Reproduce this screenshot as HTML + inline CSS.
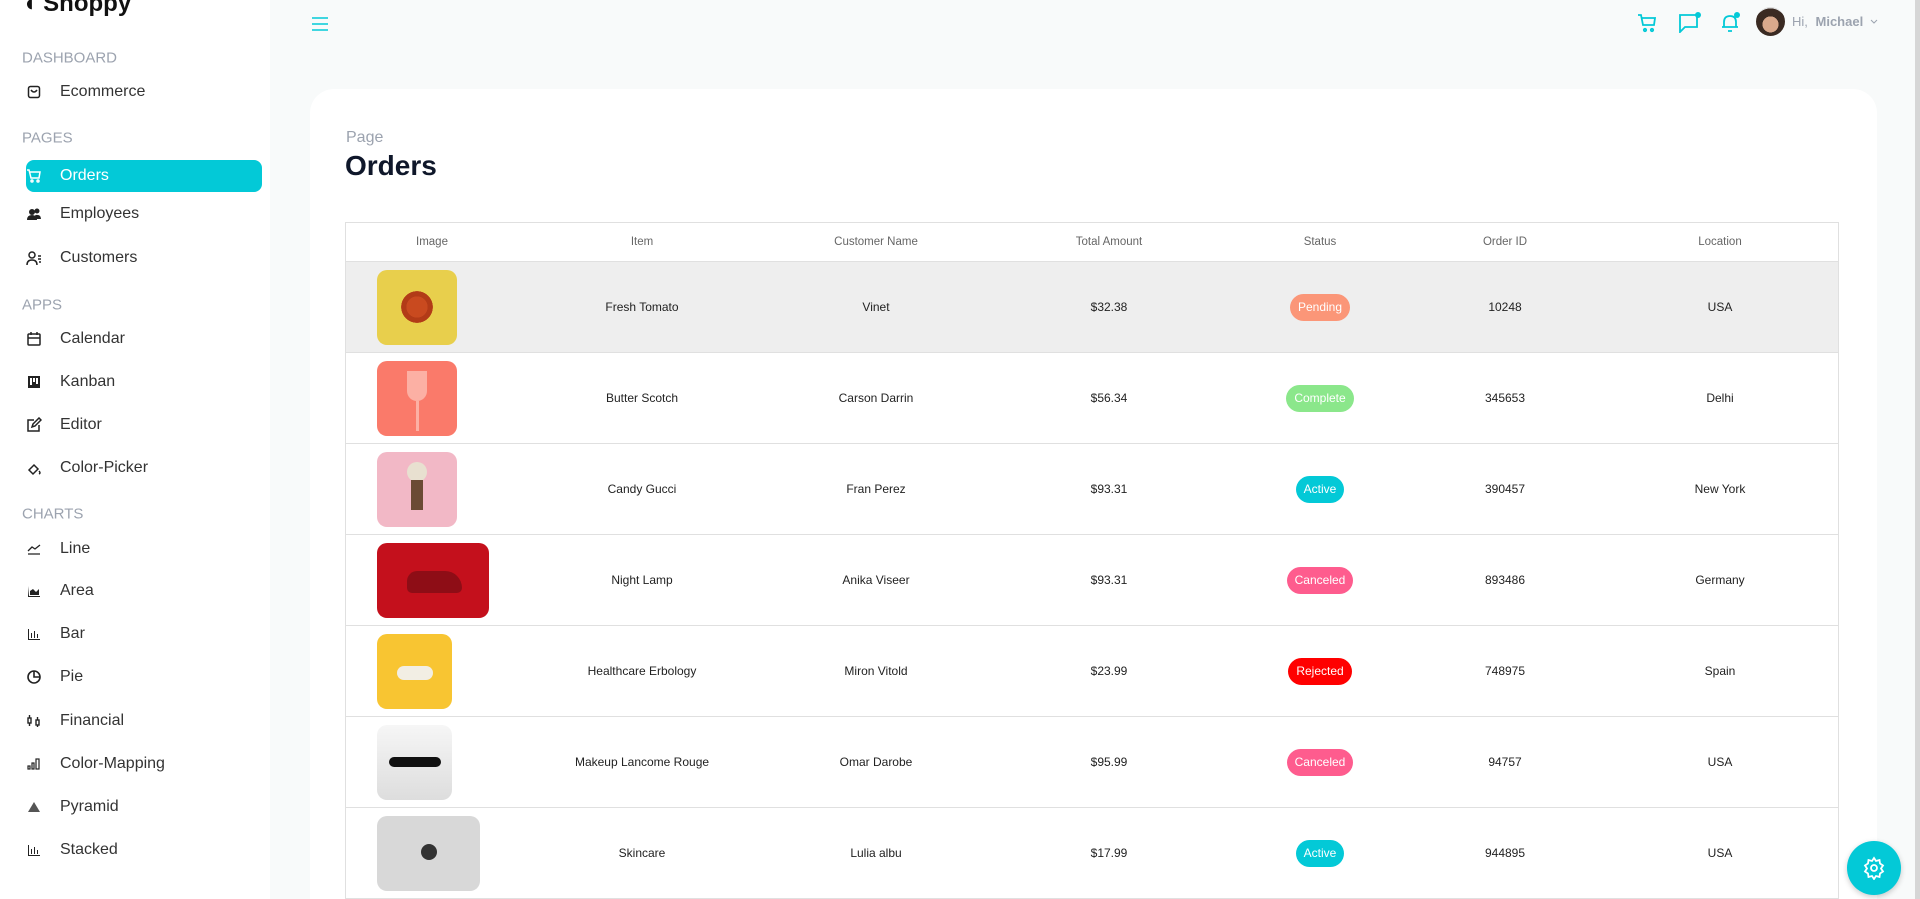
<!DOCTYPE html>
<html style="overflow:hidden;height:899px"><head><meta charset="utf-8"><style>
*{box-sizing:border-box;margin:0;padding:0}
body{width:1920px;height:899px;overflow:hidden;background:#f8fafa;font-family:"Liberation Sans",sans-serif;position:relative}
.sb{position:absolute;left:0;top:0;width:270px;height:899px;background:#fff}
.sec{position:absolute;left:22px;font-size:15px;color:#9ca3af;transform:translateY(-50%)}
.it{position:absolute;left:26px;width:236px;height:32px;display:flex;align-items:center;font-size:16px;color:#333;transform:translateY(-50%);border-radius:8px}
.it svg{width:16px;height:16px;margin-right:18px;margin-left:0}
.it.act{background:#03c9d7;color:#fff}
.card{position:absolute;left:310px;top:89px;width:1567px;height:810px;background:#fff;border-radius:24px 24px 0 0}
table{position:absolute;left:345px;top:222px;width:1494px;border-collapse:collapse;table-layout:fixed;font-size:12px;color:#222}
th{height:39px;font-weight:normal;color:#666;font-size:11.5px;border-top:1px solid #e0e0e0;border-bottom:1px solid #e0e0e0}
td{height:91px;text-align:center;border-bottom:1px solid #e0e0e0;vertical-align:middle}
tr.h td{background:#eee}
.img{margin-left:32px;margin-top:0;height:75px;border-radius:10px;position:relative;overflow:hidden}
td.ic{text-align:left;vertical-align:top;padding-top:8px}
.b{display:inline-block;color:#fff;border-radius:14px;padding:0 8px;height:27px;line-height:27px;font-size:12px}
.hd svg{position:absolute}
.wrap{position:absolute;left:0;top:0;width:1920px;height:899px;overflow:hidden}
</style></head><body><div class="wrap">
<div class="sb">
<div style="position:absolute;left:22px;top:-10px;font-size:24px;font-weight:bold;color:#111">&#9686; Shoppy</div>
<div class="sec" style="top:58px">DASHBOARD</div>
<div class="it" style="top:92px"><svg viewBox="0 0 16 16" fill="none" stroke="#222" stroke-width="1.5"><rect x="2.5" y="2.5" width="11" height="11" rx="2"/><path d="M5 6q3 4 6 0"/></svg>Ecommerce</div>
<div class="sec" style="top:138px">PAGES</div>
<div class="it act" style="top:176px"><svg viewBox="0 0 16 16" fill="none" stroke="#fff" stroke-width="1.5"><path d="M1 2h2l2 8h8l1-6H4"/><circle cx="6" cy="13" r="1"/><circle cx="12" cy="13" r="1"/></svg>Orders</div>
<div class="it" style="top:214px"><svg viewBox="0 0 16 16" fill="#222"><circle cx="6" cy="6" r="3"/><circle cx="11" cy="5" r="2.5"/><path d="M1 14q0-5 5-5t5 5zM9 9q6-1 6 4h-4z"/></svg>Employees</div>
<div class="it" style="top:258px"><svg viewBox="0 0 16 16" fill="none" stroke="#222" stroke-width="1.5"><circle cx="6" cy="5" r="3"/><path d="M1 15q0-5 5-5t5 5M12 6h3M12 9h3M13 12h2"/></svg>Customers</div>
<div class="sec" style="top:305px">APPS</div>
<div class="it" style="top:339px"><svg viewBox="0 0 16 16" fill="none" stroke="#222" stroke-width="1.5"><rect x="2" y="3" width="12" height="11" rx="1"/><path d="M2 7h12M5 1v3M11 1v3"/></svg>Calendar</div>
<div class="it" style="top:382px"><svg viewBox="0 0 16 16" fill="#222"><path d="M2 2h12v12H2z M4 4v7h2V4z M7 4v4h2V4z M10 4v6h2V4z" fill-rule="evenodd"/></svg>Kanban</div>
<div class="it" style="top:425px"><svg viewBox="0 0 16 16" fill="none" stroke="#222" stroke-width="1.5"><path d="M8 3H2v11h11V8M6 10l1-3 6-6 2 2-6 6z"/></svg>Editor</div>
<div class="it" style="top:468px"><svg viewBox="0 0 16 16" fill="none" stroke="#222" stroke-width="1.5"><path d="M3 10l5-5 4 4-5 5zM13 11q2 2 0 3"/></svg>Color-Picker</div>
<div class="sec" style="top:514px">CHARTS</div>
<div class="it" style="top:549px"><svg viewBox="0 0 16 16" fill="none" stroke="#222" stroke-width="1.3"><path d="M2 10l4-4 3 2 5-4M2 13h12"/></svg>Line</div>
<div class="it" style="top:591px"><svg viewBox="0 0 16 16" fill="#222"><path d="M2 3v11h12v-1H3zM4 12V8l3-2 3 3 3-3v6z"/></svg>Area</div>
<div class="it" style="top:634px"><svg viewBox="0 0 16 16" fill="#222"><path d="M2 3h1v10h11v1H2zM5 7h1v5H5zM8 5h1v7H8zM11 8h1v4h-1z"/></svg>Bar</div>
<div class="it" style="top:677px"><svg viewBox="0 0 16 16" fill="none" stroke="#222" stroke-width="1.6"><circle cx="8" cy="8" r="6"/><path d="M8 2v6h6"/></svg>Pie</div>
<div class="it" style="top:721px"><svg viewBox="0 0 16 16" fill="none" stroke="#222" stroke-width="1.4"><rect x="2" y="5" width="3" height="5"/><rect x="10" y="7" width="3" height="5"/><path d="M3.5 2v3M3.5 10v3M11.5 4v3M11.5 12v2"/></svg>Financial</div>
<div class="it" style="top:764px"><svg viewBox="0 0 16 16" fill="none" stroke="#222" stroke-width="1.2"><rect x="2" y="10" width="2" height="3"/><rect x="6" y="7" width="2" height="6"/><rect x="10" y="3" width="3" height="10"/></svg>Color-Mapping</div>
<div class="it" style="top:807px"><svg viewBox="0 0 16 16" fill="#555"><path d="M8 3l6 10H2z"/></svg>Pyramid</div>
<div class="it" style="top:850px"><svg viewBox="0 0 16 16" fill="#222"><path d="M2 3h1v10h11v1H2zM5 7h1v5H5zM8 5h1v7H8zM11 8h1v4h-1z"/></svg>Stacked</div>
</div>
<div style="position:absolute;left:1915px;top:0;width:5px;height:899px;background:#d6d6d6"></div>
<div class="hd">
<svg style="left:312px;top:17px" width="16" height="14" viewBox="0 0 16 14" stroke="#03c9d7" stroke-width="1.6"><path d="M0 1h16M0 7h16M0 13h16"/></svg>
<svg style="left:1637px;top:13px" width="20" height="20" viewBox="0 0 20 20" fill="none" stroke="#03c9d7" stroke-width="1.8"><path d="M1 2h3l2 10h11l1-7H5"/><circle cx="8" cy="17" r="1.2"/><circle cx="15" cy="17" r="1.2"/></svg>
<svg style="left:1679px;top:11px" width="24" height="22" viewBox="0 0 24 22" fill="none" stroke="#03c9d7" stroke-width="1.8"><path d="M1 4h17v12H6l-5 5z"/><circle cx="19" cy="4" r="3" fill="#03c9d7" stroke="none"/></svg>
<svg style="left:1720px;top:11px" width="22" height="22" viewBox="0 0 22 22" fill="none" stroke="#03c9d7" stroke-width="1.8"><path d="M4 16V11q0-6 6-6t6 6v5zM2 16h16M8 20h4"/><circle cx="17" cy="4" r="3" fill="#03c9d7" stroke="none"/></svg>
<div style="position:absolute;left:1756px;top:7px;width:29px;height:29px;border-radius:50%;background:radial-gradient(circle at 50% 60%,#d9a98c 0 35%,#3a2a22 36% 70%,#ddd 71%)"></div>
<div style="position:absolute;left:1792px;top:14px;font-size:13px;color:#9ca3af">Hi, <b style="color:#9ca3af;margin-left:4px">Michael</b></div>
<svg style="left:1870px;top:19px" width="8" height="6" viewBox="0 0 8 6" fill="none" stroke="#9ca3af"><path d="M1 1l3 3 3-3"/></svg>
</div>
<div class="card"></div>
<div style="position:absolute;left:346px;top:129px;font-size:16px;color:#9ca3af">Page</div>
<div style="position:absolute;left:345px;top:150px;font-size:28px;font-weight:bold;color:#0f172a">Orders</div>
<table>
<colgroup><col style="width:174px"><col style="width:246px"><col style="width:222px"><col style="width:244px"><col style="width:178px"><col style="width:192px"><col style="width:238px"></colgroup>
<tr><th>Image</th><th>Item</th><th>Customer Name</th><th>Total Amount</th><th>Status</th><th>Order ID</th><th>Location</th></tr>
<tr class="h"><td class="ic"><div class="img" style="width:80px;background:#e8cf4c"><div style="position:absolute;left:22px;top:18px;width:36px;height:38px;border-radius:50%;background:radial-gradient(circle,#c94a1f 0 40%,#b23b17 41% 60%,transparent 61%)"></div></div></td><td>Fresh Tomato</td><td>Vinet</td><td>$32.38</td><td><span class="b" style="background:#fb9678">Pending</span></td><td>10248</td><td>USA</td></tr>
<tr><td class="ic"><div class="img" style="width:80px;background:#fa7a6a"><div style="position:absolute;left:30px;top:10px;width:20px;height:30px;background:#fcb0a4;border-radius:0 0 10px 10px"></div><div style="position:absolute;left:39px;top:40px;width:3px;height:30px;background:#fcb0a4"></div></div></td><td>Butter Scotch</td><td>Carson Darrin</td><td>$56.34</td><td><span class="b" style="background:#8be78b">Complete</span></td><td>345653</td><td>Delhi</td></tr>
<tr><td class="ic"><div class="img" style="width:80px;background:#f2b8c6"><div style="position:absolute;left:30px;top:10px;width:20px;height:20px;border-radius:50%;background:#e8e0d0"></div><div style="position:absolute;left:34px;top:28px;width:12px;height:30px;background:#6b4a34"></div></div></td><td>Candy Gucci</td><td>Fran Perez</td><td>$93.31</td><td><span class="b" style="background:#03c9d7">Active</span></td><td>390457</td><td>New York</td></tr>
<tr><td class="ic"><div class="img" style="width:112px;background:#c4101c"><div style="position:absolute;left:30px;top:28px;width:55px;height:22px;border-radius:12px 20px 6px 6px;background:#8e0d16"></div></div></td><td>Night Lamp</td><td>Anika Viseer</td><td>$93.31</td><td><span class="b" style="background:#fe5c8e">Canceled</span></td><td>893486</td><td>Germany</td></tr>
<tr><td class="ic"><div class="img" style="width:75px;background:#f8c532"><div style="position:absolute;left:20px;top:32px;width:36px;height:14px;border-radius:7px;background:#f2eee4"></div></div></td><td>Healthcare Erbology</td><td>Miron Vitold</td><td>$23.99</td><td><span class="b" style="background:#f00">Rejected</span></td><td>748975</td><td>Spain</td></tr>
<tr><td class="ic"><div class="img" style="width:75px;background:linear-gradient(#f6f6f6,#ddd)"><div style="position:absolute;left:12px;top:32px;width:52px;height:10px;border-radius:5px;background:#111"></div></div></td><td>Makeup Lancome Rouge</td><td>Omar Darobe</td><td>$95.99</td><td><span class="b" style="background:#fe5c8e">Canceled</span></td><td>94757</td><td>USA</td></tr>
<tr><td class="ic"><div class="img" style="width:103px;background:#d8d8d8"><div style="position:absolute;left:44px;top:28px;width:16px;height:16px;border-radius:50%;background:#333"></div></div></td><td>Skincare</td><td>Lulia albu</td><td>$17.99</td><td><span class="b" style="background:#03c9d7">Active</span></td><td>944895</td><td>USA</td></tr>
</table>
<div style="position:absolute;left:345px;top:222px;width:1px;height:677px;background:#e0e0e0"></div>
<div style="position:absolute;left:1838px;top:222px;width:1px;height:677px;background:#e0e0e0"></div>
<div style="position:absolute;left:1847px;top:841px;width:54px;height:54px;border-radius:50%;background:#03c9d7;box-shadow:0 2px 6px rgba(0,0,0,.2)">
<svg style="position:absolute;left:15px;top:15px" width="24" height="24" viewBox="0 0 24 24" fill="none" stroke="#fff" stroke-width="1.8"><circle cx="12" cy="12" r="3"/><path d="M12 2l2 3 3.5-1 .5 3.5 3 2-2 3 2 3-3 2-.5 3.5-3.5-1-2 3-2-3-3.5 1-.5-3.5-3-2 2-3-2-3 3-2 .5-3.5 3.5 1z"/></svg></div>
</div></body></html>
